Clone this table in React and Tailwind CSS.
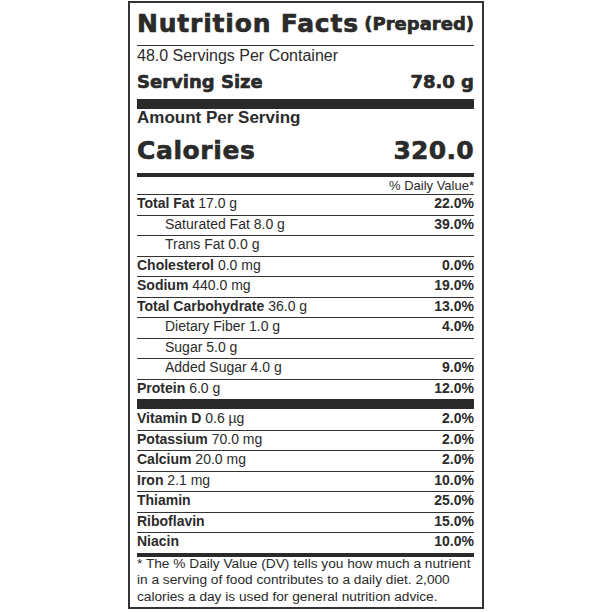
const heavy = "font-['DejaVu_Sans',sans-serif] font-bold [-webkit-text-stroke:0.6px_#262626]";

const rows = [
  { label: "Total Fat", amount: "17.0 g", dv: "22.0%" },
  { label: "Saturated Fat 8.0 g", dv: "39.0%", sub: true },
  { label: "Trans Fat 0.0 g", sub: true },
  { label: "Cholesterol", amount: "0.0 mg", dv: "0.0%" },
  { label: "Sodium", amount: "440.0 mg", dv: "19.0%" },
  { label: "Total Carbohydrate", amount: "36.0 g", dv: "13.0%" },
  { label: "Dietary Fiber 1.0 g", dv: "4.0%", sub: true },
  { label: "Sugar 5.0 g", sub: true },
  { label: "Added Sugar 4.0 g", dv: "9.0%", sub: true },
  { label: "Protein", amount: "6.0 g", dv: "12.0%" },
];

const vitamins = [
  { label: "Vitamin D", amount: "0.6 µg", dv: "2.0%" },
  { label: "Potassium", amount: "70.0 mg", dv: "2.0%" },
  { label: "Calcium", amount: "20.0 mg", dv: "2.0%" },
  { label: "Iron", amount: "2.1 mg", dv: "10.0%" },
  { label: "Thiamin", dv: "25.0%" },
  { label: "Riboflavin", dv: "15.0%" },
  { label: "Niacin", dv: "10.0%" },
];

function Row({ row, first }) {
  return (
    <div
      className={
        "flex h-[20.5px] items-center justify-between pb-[3px] text-[14px] leading-none " +
        (first ? "" : "border-t border-[#333]")
      }
    >
      {row.sub ? (
        <span className="pl-[28px]">{row.label}</span>
      ) : (
        <span>
          <span className="font-bold">{row.label}</span>
          {row.amount && <span> {row.amount}</span>}
        </span>
      )}
      <span className="font-bold">{row.dv}</span>
    </div>
  );
}

export default function App() {
  return (
    <div className="flex h-[612px] w-[612px] justify-center bg-white pt-[1px] font-['Liberation_Sans',Arial,sans-serif] text-[#2b2b2b]">
      <div className="flex h-[608px] w-[356px] flex-col border-2 border-[#333] pl-[7px] pr-[8px]">
        <div className="flex h-[42px] items-center justify-between pb-[1px]">
          <span className={heavy + " text-[25px] tracking-[0.8px]"}>Nutrition Facts</span>
          <span className={heavy + " text-[18px] [-webkit-text-stroke:0.4px_#262626]"}>(Prepared)</span>
        </div>
        <div className="border-t border-[#333]" />
        <div className="flex h-[19px] items-center text-[16px] leading-none">48.0 Servings Per Container</div>
        <div className="flex h-[34px] items-center justify-between pb-[2px]">
          <span className={heavy + " text-[18px] [-webkit-text-stroke:0.3px_#262626]"}>Serving Size</span>
          <span className={heavy + " text-[18px] [-webkit-text-stroke:0.3px_#262626]"}>78.0 g</span>
        </div>
        <div className="h-[10px] bg-[#2a2a2a]" />
        <div className="flex h-[17px] items-center text-[17px] font-bold leading-none">Amount Per Serving</div>
        <div className="flex h-[47px] items-center justify-between pt-[2px]">
          <span className={heavy + " text-[25px] tracking-[0.6px]"}>Calories</span>
          <span className={heavy + " text-[25px] tracking-[0.3px]"}>320.0</span>
        </div>
        <div className="h-[4px] bg-[#2a2a2a]" />
        <div className="flex h-[17px] items-center justify-end pb-[1px] text-[13px] leading-none">% Daily Value*</div>
        {rows.map((r) => (
          <Row key={r.label} row={r} />
        ))}
        <div className="h-[10px] bg-[#2a2a2a]" />
        {vitamins.map((r, i) => (
          <Row key={r.label} row={r} first={i === 0} />
        ))}
        <div className="h-[4px] bg-[#2a2a2a]" />
        <div className="-mt-[1px] text-[13.7px] leading-[16.5px] whitespace-nowrap">
          <div>* The % Daily Value (DV) tells you how much a nutrient</div>
          <div>in a serving of food contributes to a daily diet. 2,000</div>
          <div>calories a day is used for general nutrition advice.</div>
        </div>
      </div>
    </div>
  );
}
